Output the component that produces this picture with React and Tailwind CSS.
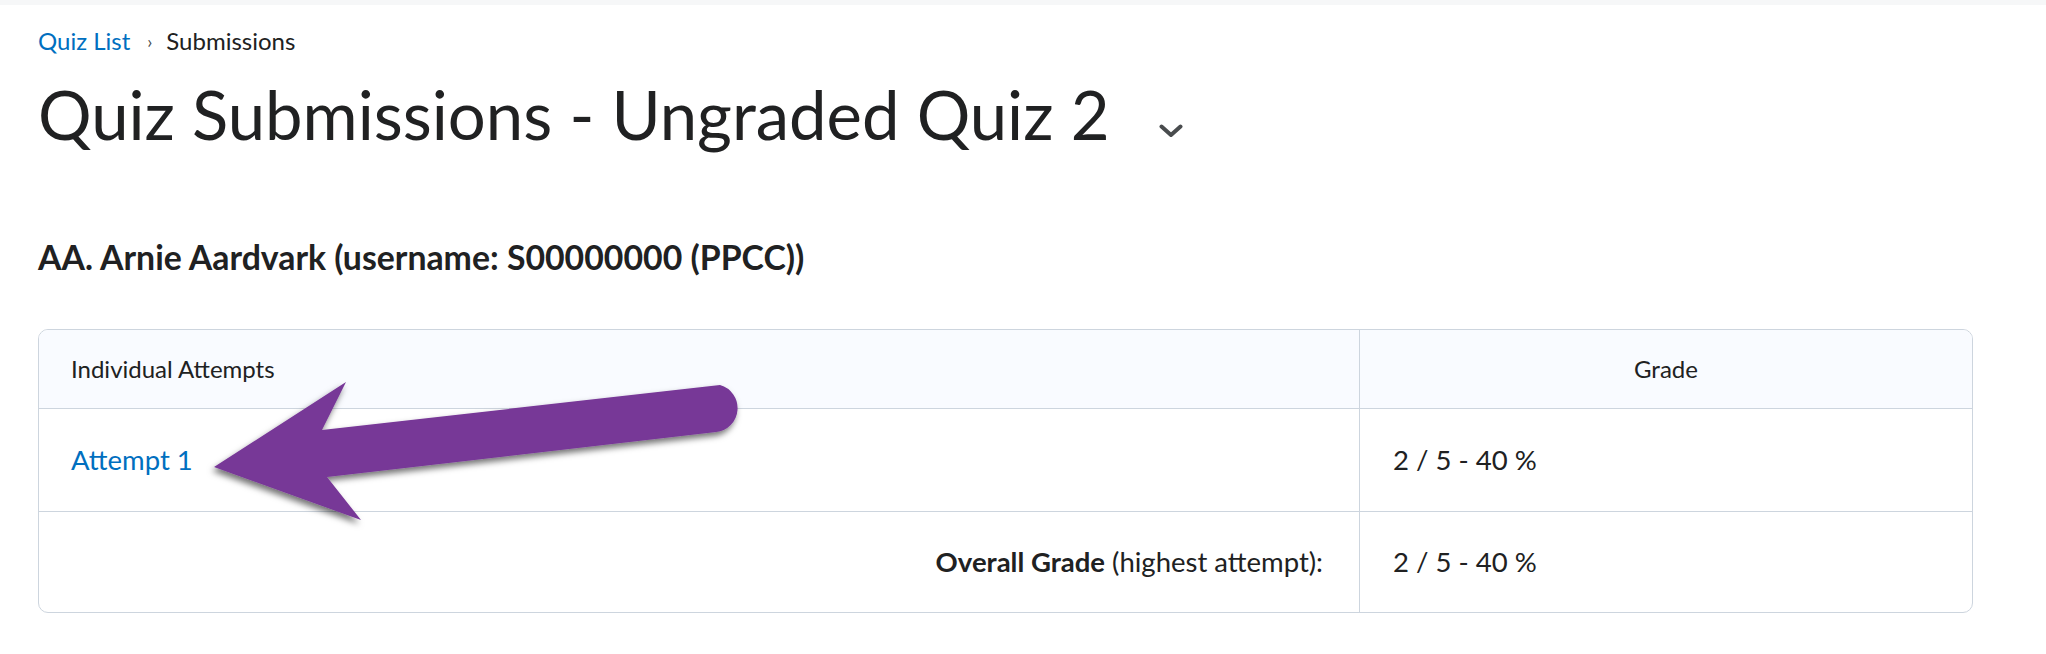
import React from 'react'

// Quiz submissions page for one learner, with the callout arrow drawn on top.

function ChevronDown() {
  return (
    <svg width="24" height="14" viewBox="0 0 24 14" className="shrink-0">
      <path d="M2.5 2.5 L12 11 L21.5 2.5" fill="none" stroke="#494c4e" strokeWidth="4" strokeLinecap="round" strokeLinejoin="round" />
    </svg>
  )
}

function CalloutArrow() {
  return (
    <svg width="2046" height="654" viewBox="0 0 2046 654" className="pointer-events-none absolute left-0 top-0">
      <defs>
        <filter id="arrowShadow" x="-20%" y="-30%" width="140%" height="160%">
          <feDropShadow dx="-2" dy="4" stdDeviation="3" floodColor="#000" floodOpacity="0.55" />
        </filter>
      </defs>
      <path
        d="M214 467 L346 382 L322 430 L720 385 A24 24 0 0 1 716 432 L327 477 L361 520 Z"
        fill="#773797"
        filter="url(#arrowShadow)"
      />
    </svg>
  )
}

export default function App() {
  return (
    <div className="relative h-[654px] w-[2046px] overflow-hidden bg-white font-['Lato','Noto_Sans',sans-serif] text-[#202122]">
      <div className="h-[5px] bg-[#f6f7f8]" />

      <div className="pl-[38px]">
        {/* breadcrumb */}
        <nav className="mt-[21px] flex items-center text-[24px] leading-[30px]">
          <a className="text-[#006fbf]">Quiz List</a>
          <span className="ml-[17px] mr-[14px] text-[18px] text-[#494c4e]">›</span>
          <span>Submissions</span>
        </nav>

        {/* page title */}
        <div className="mt-[18px] flex items-start">
          <h1 className="text-[67px] leading-[80px] font-normal">Quiz Submissions - Ungraded Quiz 2</h1>
          <span className="ml-[49px] mt-[50px]">
            <ChevronDown />
          </span>
        </div>

        <h2 className="mt-[83px] text-[33.8px] leading-[40px] font-bold">
          AA. Arnie Aardvark (username: S00000000 (PPCC))
        </h2>

        {/* attempts table */}
        <div className="mt-[52px] w-[1935px] overflow-hidden rounded-[10px] border border-[#cdd5de]">
          <div className="flex h-[79px] border-b border-[#cdd5de] bg-[#f9fbff] text-[24px]">
            <div className="flex w-[1321px] items-center border-r border-[#cdd5de] pl-[32px]">Individual Attempts</div>
            <div className="flex flex-1 items-center justify-center">Grade</div>
          </div>
          <div className="flex h-[103px] border-b border-[#cdd5de] text-[27.5px]">
            <div className="flex w-[1321px] items-center border-r border-[#cdd5de] pl-[32px]">
              <a className="text-[#006fbf]">Attempt 1</a>
            </div>
            <div className="flex flex-1 items-center pl-[33px]">2 / 5 - 40 %</div>
          </div>
          <div className="flex h-[100px] text-[27.5px]">
            <div className="flex w-[1321px] items-center justify-end border-r border-[#cdd5de] pr-[36px]">
              <span>
                <b className="font-bold">Overall Grade</b> (highest attempt):
              </span>
            </div>
            <div className="flex flex-1 items-center pl-[33px]">2 / 5 - 40 %</div>
          </div>
        </div>
      </div>

      <CalloutArrow />
    </div>
  )
}
